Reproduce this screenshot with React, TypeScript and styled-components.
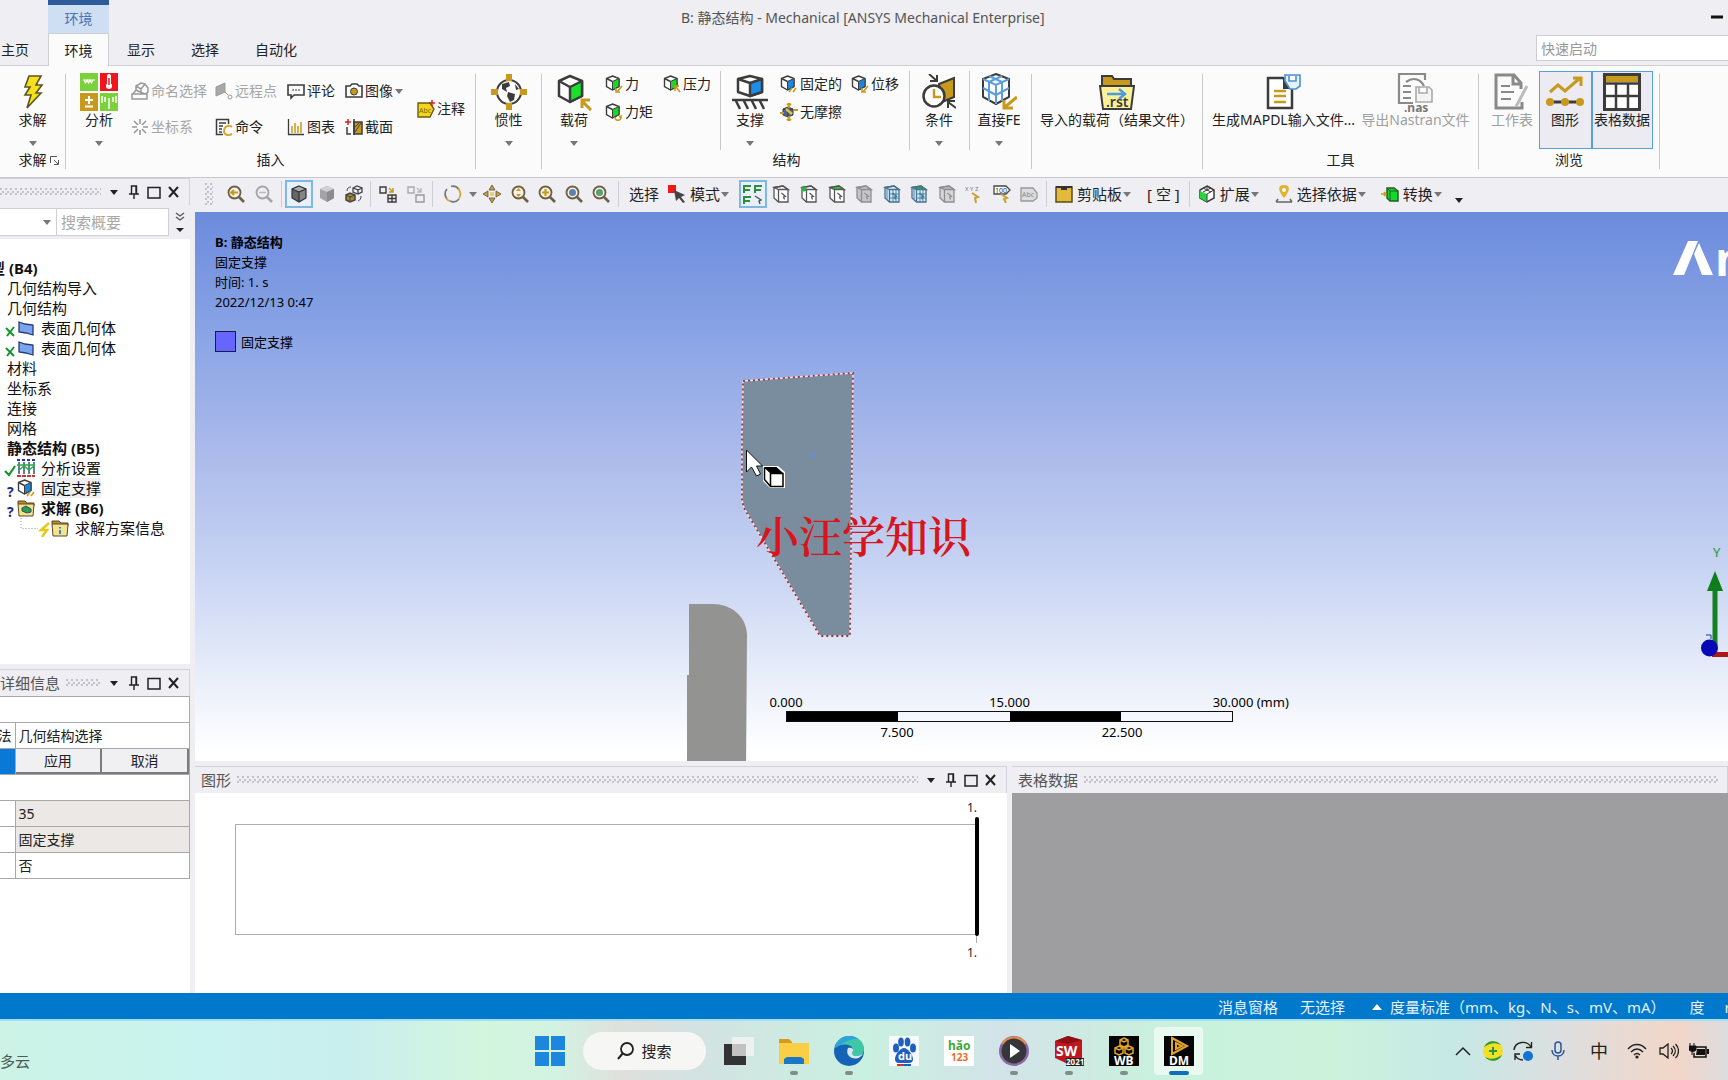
import React from "react";
import styled, { createGlobalStyle, css } from "styled-components";

const SANS = '"Noto Sans", "Noto Sans CJK SC", sans-serif';
const GOLD = "#c79a1e";
const INK = "#3c3c3c";

const GlobalStyle = createGlobalStyle`
  * { box-sizing: border-box; }
  body { margin: 0; overflow: hidden; background: #efeef3; font: 14px/18px ${SANS}; color: #222; }
  button, input, select { font: inherit; color: inherit; }
  button { background: none; border: 0; padding: 0; white-space: nowrap; }
  svg { display: block; flex: none; }
`;

/* ---------- frame ---------- */
const Window = styled.div`
  display: flex;
  flex-direction: column;
  height: 100vh;
  overflow: hidden;
`;
const Header = styled.header`
  display: grid;
  flex: none;
  grid-template-columns: 48px 61px 1fr 192px;
  grid-template-rows: 33px 33px;
  background: #efeef3;
  border-bottom: 1px solid #cfced3;
  height: 66px;
`;
const ContextTab = styled.div`
  grid-column: 2;
  border-top: 5px solid #2f5b9b;
  background: #cfdff3;
  color: #4a72b5;
  text-align: center;
  line-height: 28px;
`;
const Title = styled.h1`
  grid-column: 3;
  margin: 0;
  padding-left: 572px;
  font-size: 14px;
  font-weight: 400;
  line-height: 35px;
  color: #555;
  white-space: nowrap;
`;
const Minimise = styled.button`
  justify-self: end;
  padding-right: 5px;
`;
const Tab = styled.button<{ $active?: boolean }>`
  text-align: left;
  padding: 0 18px;
  ${(p) =>
    p.$active &&
    css`
      padding: 0;
      text-align: center;
      background: #fafbfa;
      border: 1px solid #cfced3;
      border-bottom: 0;
      margin-bottom: -1px;
    `}
`;
const HomeTab = styled(Tab)`
  padding: 0 0 0 1px;
`;
const Tabs = styled.nav`
  display: flex;
`;
const QuickLaunch = styled.input`
  height: 26px;
  margin: 2px -1px 0 0;
  padding: 0 4px;
  border: 1px solid #cdcdd8;
  background: #fff;
  min-width: 0;
  &::placeholder { color: #999; opacity: 1; }
`;

/* ---------- ribbon ---------- */
const Ribbon = styled.div`
  display: flex;
  flex: none;
  height: 112px;
  padding-top: 5px;
  background: #fafbfa;
  border-bottom: 1px solid #c9c9cd;
`;
const Group = styled.section<{ $w: number }>`
  flex: 0 0 ${(p) => p.$w}px;
  display: flex;
  flex-direction: column;
  height: 98px;
`;
const GroupBody = styled.div`
  display: flex;
  justify-content: center;
  height: 79px;
`;
const GroupLabel = styled.div`
  display: flex;
  justify-content: center;
  align-items: center;
  position: relative;
  line-height: 19px;
`;
const Launcher = styled.svg`
  position: absolute;
  left: 50px;
  top: 6px;
`;
const Divider = styled.div<{ $inner?: boolean }>`
  flex: 0 0 1px;
  height: ${(p) => (p.$inner ? 79 : 95)}px;
  margin-top: ${(p) => (p.$inner ? 0 : 3)}px;
  background: #c8c8cc;
`;
const Big = styled.button<{ $w: number; $on?: boolean; $off?: boolean }>`
  flex: 0 0 ${(p) => p.$w}px;
  display: flex;
  flex-direction: column;
  align-items: center;
  height: 78px;
  border: 1px solid ${(p) => (p.$on ? "#55a0e0" : "transparent")};
  background: ${(p) => (p.$on ? "#ecebf2" : "none")};
  color: ${(p) => (p.$off ? "#a0a0a0" : "#222")};
`;
const BigIcon = styled.span`
  display: grid;
  place-items: center;
  height: 39px;
  padding-top: 1px;
`;
const Caret = styled.i<{ $dark?: boolean; $gap?: number }>`
  display: inline-block;
  border: 4px solid transparent;
  border-top: 5px solid ${(p) => (p.$dark ? "#222" : "#777")};
  border-bottom: 0;
  margin-top: ${(p) => p.$gap ?? 0}px;
`;
const SmallGrid = styled.div<{ $cols: string; $row: number; $left: number; $top?: number }>`
  display: grid;
  grid-template-columns: ${(p) => p.$cols};
  grid-auto-rows: ${(p) => p.$row}px;
  margin-left: ${(p) => p.$left}px;
  margin-top: ${(p) => p.$top ?? -1}px;
`;
const Small = styled.button<{ $off?: boolean }>`
  display: flex;
  align-items: center;
  gap: 2px;
  color: ${(p) => (p.$off ? "#a6a6a6" : "#222")};
`;
const Sub = styled.div<{ $w: number; $pad?: number }>`
  flex: 0 0 ${(p) => p.$w}px;
  display: flex;
  padding-left: ${(p) => p.$pad ?? 0}px;
`;

/* ---------- workspace ---------- */
const Work = styled.main`
  flex: 1;
  min-height: 0;
  display: flex;
  gap: 5px;
`;
const Side = styled.aside`
  flex: 0 0 190px;
  display: flex;
  flex-direction: column;
  min-height: 0;
  overflow: hidden;
`;
const Stage = styled.div`
  flex: 1;
  min-width: 0;
  display: flex;
  flex-direction: column;
`;
const PanelHead = styled.header<{ $pad?: number }>`
  display: flex;
  align-items: center;
  gap: 6px;
  flex: none;
  height: 27px;
  padding: 0 9px 0 ${(p) => p.$pad ?? 0}px;
  border: 1px solid #d3d2da;
  border-left: 0;
  border-bottom: 0;
  background: #efeef2;
  font-size: 15px;
  color: #555;
  white-space: nowrap;
  overflow: hidden;
`;
const Dots = styled.span`
  flex: 1;
  height: 8px;
  background-image: radial-gradient(circle at 1px 1px, #c2c1c9 0.9px, transparent 1px),
    radial-gradient(circle at 3px 4px, #c2c1c9 0.9px, transparent 1px);
  background-size: 5px 5px;
`;
const HeadButtons = styled.span`
  display: flex;
  align-items: center;
  gap: 7px;
`;
const HeadBtn = styled.button`
  display: grid;
  place-items: center;
  width: 13px;
  height: 20px;
`;
const Filter = styled.div`
  display: flex;
  flex: none;
  height: 34px;
  padding: 3px 0;
  background: #efeef2;
`;
const FilterSelect = styled.span`
  position: relative;
  flex: 0 0 57px;
  display: flex;
  select {
    appearance: none;
    width: 100%;
    border: 1px solid #cfcfda;
    border-left: 0;
    border-radius: 0;
    background: #fff;
  }
  i { position: absolute; right: 6px; top: 12px; }
`;
const FilterInput = styled.input`
  flex: 0 0 112px;
  min-width: 0;
  border: 1px solid #cfcfda;
  border-left: 0;
  padding: 0 4px;
  font-size: 15px;
  &::placeholder { color: #a8a8a8; opacity: 1; }
`;
const Overflow = styled.button`
  flex: 1;
  display: grid;
  place-items: center;
`;
const Tree = styled.ul`
  flex: 1;
  margin: 0;
  padding: 19px 0 0;
  list-style: none;
  background: #fff;
  overflow: hidden;
`;
const Node = styled.li<{ $x: number; $bold?: boolean }>`
  display: flex;
  align-items: center;
  height: 20px;
  margin-left: ${(p) => p.$x}px;
  font-size: 15px;
  font-weight: ${(p) => (p.$bold ? 700 : 400)};
  color: #111;
  white-space: nowrap;
  svg:last-of-type { margin-right: 6px; }
`;
const Chip = styled.span<{ $on?: boolean }>`
  background: ${(p) => (p.$on ? "#f0eff2" : "none")};
  line-height: 20px;
`;
const Details = styled.section`
  flex: 0 0 324px;
  margin-top: 5px;
  background: #fff;
`;
const Props = styled.table`
  width: 190px;
  border-collapse: collapse;
  table-layout: fixed;
  color: #222;
  td, th {
    height: 26px;
    padding: 0 3px;
    border: 1px solid #a9a8a8;
    border-left: 0;
    font-weight: 400;
    line-height: 24px;
    white-space: nowrap;
    overflow: hidden;
  }
`;
const KeyCell = styled.th<{ $on?: boolean }>`
  width: 15px;
  background: ${(p) => (p.$on ? "#0a78d6" : "#fff")};
  span { display: flex; justify-content: flex-end; }
`;
const ValueCell = styled.td<{ $ro?: boolean }>`
  background: ${(p) => (p.$ro ? "#ebe8e5" : "#fff")};
`;
const ButtonCell = styled.td`
  && { padding: 0; }
  div { display: flex; }
`;
const ApplyBtn = styled.button`
  flex: 1;
  height: 25px;
  background: #f0eff2;
  border-right: 2px solid #7b7b7b;
  border-bottom: 2px solid #7b7b7b;
`;

/* ---------- toolbar ---------- */
const Toolbar = styled.div`
  display: flex;
  align-items: center;
  flex: none;
  height: 34px;
  padding: 0 0 2px 10px;
  background: #efeef3;
  font-size: 15px;
`;
const Grip = styled.span`
  width: 8px;
  height: 22px;
  margin-right: 9px;
  background-image: radial-gradient(circle at 1px 1px, #c2c1c9 0.9px, transparent 1px),
    radial-gradient(circle at 3px 4px, #c2c1c9 0.9px, transparent 1px);
  background-size: 5px 5px;
`;
const Tool = styled.button<{ $on?: boolean; $w?: number }>`
  display: grid;
  place-items: center;
  flex: 0 0 ${(p) => p.$w ?? 28}px;
  height: 28px;
  border: 2px solid ${(p) => (p.$on ? "#7db7e2" : "transparent")};
  background: ${(p) => (p.$on ? "#e8f1fa" : "none")};
`;
const ToolSep = styled.span`
  flex: 0 0 1px;
  height: 26px;
  margin: 0 3px;
  background: #cfced6;
`;
const ToolText = styled.button<{ $l?: number; $r?: number }>`
  display: flex;
  align-items: center;
  gap: 4px;
  margin-left: ${(p) => p.$l ?? 0}px;
  margin-right: ${(p) => p.$r ?? 0}px;
  i { margin-left: -3px; }
`;

/* ---------- viewport ---------- */
const View = styled.section`
  position: relative;
  flex: 1;
  min-height: 0;
  overflow: hidden;
  background: linear-gradient(#6b8bdc, #8ca6e6 24%, #a8b8ea 42%, #c9d5f3 66%, #e4eaf9 82%, #fff 98%);
  font-size: 13px;
  color: #000;
`;
const Info = styled.div`
  position: absolute;
  left: 20px;
  top: 20px;
  line-height: 20px;
  b, span { display: block; }
`;
const Legend = styled.div`
  display: flex;
  align-items: center;
  gap: 5px;
  margin-top: 19px;
  i { width: 21px; height: 21px; background: #6666ff; border: 1px solid #1a1a50; }
`;
const Model = styled.svg`
  position: absolute;
  left: 0;
  top: 0;
`;
const Watermark = styled.div`
  position: absolute;
  left: 561px;
  top: 299px;
  font: 600 43px/48px "Noto Serif CJK SC", "Noto Sans CJK SC", serif;
  color: #d8141c;
  white-space: nowrap;
`;
const Scale = styled.div`
  position: absolute;
  left: 591px;
  top: 480px;
  width: 447px;
`;
const Ticks = styled.div<{ $inset?: boolean }>`
  display: flex;
  justify-content: space-between;
  height: 19px;
  line-height: 20px;
  padding: 0 ${(p) => (p.$inset ? 111 : 0)}px;
  span { display: flex; justify-content: center; width: 0; white-space: pre; }
  em { font-style: normal; width: 0; }
`;
const Bar = styled.div`
  display: grid;
  grid-template-columns: repeat(4, 1fr);
  height: 11px;
  border: 1px solid #111;
  i:nth-child(odd) { background: #000; }
`;
const Logo = styled.div`
  position: absolute;
  left: calc(100% - 55px);
  top: 29px;
  display: flex;
  gap: 1px;
  color: #fff;
  font: 700 46px/34px "Open Sans", sans-serif;
`;
const Triad = styled.svg`
  position: absolute;
  right: 0;
  top: 329px;
`;

/* ---------- bottom panes ---------- */
const Panes = styled.div`
  flex: 0 0 232px;
  display: flex;
  gap: 5px;
  padding-top: 5px;
`;
const Pane = styled.section<{ $basis: string; $bg: string }>`
  flex: ${(p) => p.$basis};
  display: flex;
  flex-direction: column;
  min-width: 0;
  background: ${(p) => p.$bg};
`;
const Graph = styled.div`
  padding: 6px 30px 0 40px;
  font-size: 12px;
  text-align: right;
`;
const Plot = styled.div`
  position: relative;
  height: 111px;
  margin: 7px 0 9px;
  border: 1px solid #adadad;
  &::before {
    content: "";
    position: absolute;
    right: -1px;
    top: 100%;
    width: 1px;
    height: 9px;
    background: #adadad;
  }
  &::after {
    content: "";
    position: absolute;
    right: -3px;
    top: -8px;
    bottom: -2px;
    width: 4px;
    border-radius: 2px;
    background: #000;
  }
`;
const Status = styled.footer`
  flex: 0 0 26px;
  display: flex;
  align-items: center;
  justify-content: flex-end;
  background: #0078cb;
  color: #e4f1fb;
  font-size: 15px;
  line-height: 24px;
  white-space: nowrap;
  margin-right: -42px;
  padding-top: 2px;
`;
const StatusItem = styled.span<{ $r: number }>`
  display: flex;
  align-items: center;
  gap: 8px;
  margin-right: ${(p) => p.$r}px;
  i { border: 5px solid transparent; border-top: 0; border-bottom: 6px solid #fff; }
`;

/* ---------- taskbar ---------- */
const Taskbar = styled.div`
  flex: 0 0 61px;
  display: grid;
  grid-template-columns: 1fr auto 1fr;
  border-top: 2px solid #a6dff5;
  background: linear-gradient(90deg, #cdf3e6 0, #c9f3f0 12%, #c9eeee 20%, #d3f6df 28%, #d2f3e2 32%, #dfe0dc 36%, #d3e2e2 40%, #c9f0e0 50%, #d3e3e8 58%, #c8f2dc 68%, #cdf2dc 77%, #c6e9e6 84%, #dcdfe0 90%, #f2d6c8 97%, #dcdce0);
`;
const Weather = styled.span`
  align-self: center;
  margin-top: 20px;
  font-size: 15px;
  color: #4b5b58;
`;
const Apps = styled.div`
  display: flex;
  align-items: center;
`;
const AppBtn = styled.button<{ $w?: number; $on?: boolean }>`
  position: relative;
  display: grid;
  place-items: center;
  width: ${(p) => p.$w ?? 55}px;
  height: 50px;
  &::before {
    content: "";
    position: absolute;
    inset: 1px 3px;
    border-radius: 4px;
    background: ${(p) => (p.$on ? "rgba(255,255,255,.6)" : "none")};
  }
  svg { position: relative; }
`;
const Mark = styled.i<{ $on?: boolean }>`
  position: absolute;
  bottom: 1px;
  width: ${(p) => (p.$on ? 20 : 8)}px;
  height: 4px;
  border-radius: 2px;
  background: ${(p) => (p.$on ? "#0f6fb8" : "#7c8f8a")};
`;
const Search = styled.button`
  display: flex;
  align-items: center;
  justify-content: center;
  gap: 7px;
  width: 123px;
  height: 38px;
  margin: 0 5px 0 6px;
  border-radius: 19px;
  background: #f6f6f4;
  font-size: 15px;
`;
const Tray = styled.div`
  display: flex;
  align-items: center;
  justify-content: flex-end;
  padding-right: 14px;
`;
const TrayBtn = styled.button<{ $w: number }>`
  display: grid;
  place-items: center;
  width: ${(p) => p.$w}px;
  height: 40px;
  font-size: 18px;
`;

/* ---------- icons ---------- */
type IconProps = { w?: number; h?: number; vb?: string; children: React.ReactNode };
const Svg = ({ w = 18, h = 18, vb, children }: IconProps) => (
  <svg width={w} height={h} viewBox={vb ?? `0 0 ${w} ${h}`} fill="none" aria-hidden="true">{children}</svg>
);
const SmallCube = ({ face, tail }: { face: string; tail: string }) => (
  <Svg>
    <path d="M7.500 1 14 3.500v8L7.500 15 1.500 11.500v-8z" fill="#fff" stroke={INK} strokeWidth="1.400" />
    <path d="M7.500 6.500 14 3.500v8L7.500 15z" fill={face} stroke={INK} />
    <path d="M1.500 3.500l6 3" stroke={INK} strokeWidth="1.400" />
    <path d={tail} stroke={GOLD} strokeWidth="1.600" />
  </Svg>
);
const ToolCube = ({ face = "#fff", top = "none", line = "#555", dot = "none", grid = false }: { face?: string; top?: string; line?: string; dot?: string; grid?: boolean }) => (
  <Svg>
    <path d="M2 2.500 11 1l5 3.500V17H6.500L2 13z" fill={face} stroke={line} strokeWidth="1.300" />
    <path d="M2 2.500 11 1l5 3.500H6.500z" fill={top} stroke={line} strokeWidth="1.300" />
    <path d="M6.500 4.500V17" stroke={line} strokeWidth="1.300" />
    <circle cx="4" cy="4" r="2.500" fill={dot} />
    {grid && <path d="M6.500 9H16M6.500 13H16M10 4.500V17M13 4.500V17M4 3.500v11" stroke="#3c86b8" />}
    <path d="M9.500 8l4 3.500-2 .5 1 2.500" stroke={line} strokeWidth="1.200" />
  </Svg>
);
const Lens = ({ line = "#6b5f48", inner, fill = "#f6f1e2" }: { line?: string; inner?: React.ReactNode; fill?: string }) => (
  <Svg>
    <circle cx="7.500" cy="7.500" r="6" fill={fill} stroke={line} strokeWidth="1.800" />
    <path d="M12 12l5 5" stroke={line} strokeWidth="2.600" />
    {inner}
  </Svg>
);
const Bolt = () => (
  <Svg w={24} h={36}><path d="M8 2h12l-5 9h6l-6 8h5L6 34l4-13H4l5-8H4z" fill="#f6e01e" stroke="#5b5524" strokeWidth="1.600" /></Svg>
);
const Analysis = () => (
  <Svg w={38} h={38}>
    <path d="M0 0h18v18H0zM20 20h18v18H20z" fill="#7bd13c" />
    <path d="M20 0h18v18H20z" fill="#f0141c" /><path d="M0 20h18v18H0z" fill={GOLD} />
    <path d="M3 7h12M4 7l1.500 3L7 7l1.500 3L10 7l1.500 3L13 7" stroke="#fff" strokeWidth="1.200" />
    <path d="M29 3v9" stroke="#fff" strokeWidth="4" strokeLinecap="round" /><circle cx="29" cy="13" r="3" fill="#fff" /><path d="M29 5v7" stroke="#f0141c" strokeWidth="1.500" />
    <path d="M9 23v8M5 27h8M5 33.500h8" stroke="#fff" strokeWidth="2" />
    <path d="M29 25v11M25 24v5M33 24v5M22 23v7M36 23v7" stroke="#fff" strokeWidth="1.500" />
  </Svg>
);
const Globe = () => (
  <Svg w={36} h={36}>
    <circle cx="18" cy="18" r="12" fill="#fff" stroke={INK} strokeWidth="2" />
    <path d="M11 10l7-2 1 4-4 2 1 4-5-3zM17 18l7 2-1 6-4 2-3-6zM24 10l4 5-3 1z" fill={INK} />
    <path d="M15 0h6v7h-6zM15 29h6v7h-6zM0 15h7v6H0zM29 15h7v6h-7z" fill={GOLD} />
  </Svg>
);
const Load = () => (
  <Svg w={36} h={38}>
    <g stroke={INK} strokeWidth="2.500" strokeLinejoin="round"><path d="M14 3l12 5v15L14 29 3 23V8z" fill="#fff" /><path d="M14 14l12-6v15l-12 6z" fill="#19e02b" /><path d="M3 8l11 6" /></g>
    <path d="M35 37l-9-9M26 35v-8h8" stroke={GOLD} strokeWidth="3" />
  </Svg>
);
const Support = () => (
  <Svg w={36} h={36}>
    <g stroke={INK} strokeWidth="2.500" strokeLinejoin="round"><path d="M18 2l12 3v13l-12 4-12-4V5z" fill="#fff" /><path d="M18 9l12-4v13l-12 4z" fill="#1b8fe8" /><path d="M6 5l12 4" /></g>
    <path d="M0 26h36M4 27l4 8M12 27l4 8M20 27l4 8M28 27l4 8" stroke={INK} strokeWidth="2.500" />
  </Svg>
);
const Condition = () => (
  <Svg w={34} h={36}>
    <path d="M17 10l15-6v19l-12 5z" fill={GOLD} stroke={INK} strokeWidth="2" />
    <circle cx="12" cy="22" r="10.500" fill="#fff" stroke={INK} strokeWidth="2.500" /><path d="M12 15v8h7" stroke={GOLD} strokeWidth="2.500" />
    <path d="M7 0l8 7M15 1v6H8M34 34l-8-6M26 34v-7h7" stroke={INK} strokeWidth="2" />
  </Svg>
);
const DirectFE = () => (
  <Svg w={36} h={38}>
    <path d="M15 1l13 5v18l-13 7-13-7V6z" fill="#fff" stroke={INK} strokeWidth="2" />
    <path d="M2 6l13 6 13-6M15 12v19M8 3l13 6v19M21 3L8 9v19M2 15l13 7 13-7" stroke="#5b9ee0" strokeWidth="2" />
    <path d="M36 24l-12 10M23 27v8h9" stroke={GOLD} strokeWidth="3" />
  </Svg>
);
const Rst = () => (
  <Svg w={36} h={36}>
    <path d="M3 11V2h10l2 3h17v7" fill={GOLD} stroke={INK} strokeWidth="2" />
    <path d="M1 12h34l-3 23H4z" fill="#fdf09b" stroke={INK} strokeWidth="2" />
    <path d="M8 20h16M20 15l6 5-6 5" stroke="#4b9be0" strokeWidth="2.500" />
    <text x="7" y="33" fontFamily="Noto Sans" fontWeight="600" fontSize="14" fill={INK}>.rst</text>
  </Svg>
);
const Mapdl = () => (
  <Svg w={36} h={36}>
    <path d="M2 4h15l9 10v20H2z" fill="#fff" stroke={INK} strokeWidth="2.500" /><path d="M17 3v12h10z" fill={INK} />
    <path d="M8 17h12M8 22h12M8 28h12" stroke={GOLD} strokeWidth="2.500" />
    <path d="M19 1h15v11l-4 3h-6l-5-8zM23 2v5h7V2" fill="#e6f1fb" stroke="#4b90d8" strokeWidth="1.600" />
  </Svg>
);
const Nas = () => (
  <Svg w={38} h={40}>
    <path d="M28 7V1H2v29h14" stroke="#8a8a8a" strokeWidth="2.200" />
    <path d="M6 13h8M6 19h8M6 25h8M9 9c8-6 15-2 18 4" stroke="#8a8a8a" strokeWidth="2.200" />
    <path d="M19 14h13l3 3v12H19zM22 14v6h8v-6" fill="#f4f4f4" stroke="#aaa" strokeWidth="1.600" />
    <text x="7" y="39" fontFamily="Noto Sans" fontWeight="700" fontSize="12" fill="#777">.nas</text>
  </Svg>
);
const Sheet = () => (
  <Svg w={36} h={38}>
    <path d="M27 16V10l-7-8H2v33h26v-6M19 2v9h8" stroke="#8a8a8a" strokeWidth="3" />
    <path d="M7 13h9M7 19h13M7 26h10" stroke="#8a8a8a" strokeWidth="2" /><path d="M33 13l-9 17-2 3" stroke="#bbb" strokeWidth="3" />
  </Svg>
);
const GraphIcon = () => (
  <Svg w={38} h={32}>
    <path d="M4 16l8-7 7 6L34 2M27 2h8v8" stroke={GOLD} strokeWidth="3" />
    <path d="M4 26h30" stroke={INK} strokeWidth="3" />
    <g fill={GOLD}><circle cx="4" cy="26" r="4" /><circle cx="19" cy="26" r="4" /><circle cx="34" cy="26" r="4" /></g>
  </Svg>
);
const TableIcon = () => (
  <Svg w={38} h={38}>
    <path d="M1.500 1.500h35v35h-35z" fill="#fff" stroke={INK} strokeWidth="3" /><path d="M3 3h32v6H3z" fill={GOLD} />
    <path d="M1 10.500h36M1 23h36M13 10v26M25 10v26" stroke={INK} strokeWidth="2.500" />
  </Svg>
);
const NamedSel = () => <Svg><path d="M1 12h15v5H1zM2 12l3-4M5 4l5-3 4 1 3 4v4l-3 2-5-2-4-2zM5 4l5 3v4M10 7l4-5" stroke="#999" strokeWidth="1.500" /></Svg>;
const Remote = () => <Svg><path d="M1 5l9-4v9l-9 4z" fill="#a8a8a8" stroke="#999" /><path d="M10 10l3 3" stroke="#999" /><circle cx="15" cy="15" r="2" stroke="#999" /></Svg>;
const Comment = () => <Svg><path d="M1 3h16v10H7l-3 3v-3H1z" stroke={INK} strokeWidth="1.600" /><path d="M5 8h2M8 8h2M11 8h2" stroke={INK} /></Svg>;
const Camera = () => <Svg><path d="M1 4h4l2-2h5l2 2h3v11H1z" stroke={INK} strokeWidth="1.600" /><circle cx="9" cy="9.500" r="3.500" fill={GOLD} stroke={INK} /></Svg>;
const Axis = () => <Svg><path d="M9 1v5M9 12v5M1 9h5M12 9h5M3 3l4 4M15 3l-4 4M3 15l4-4M15 15l-4-4" stroke="#999" strokeWidth="1.600" /></Svg>;
const Cmd = () => <Svg><path d="M8 16.500H1.500v-15h12V6M4 5h7M4 8h4M4 11h3M4 14h3" stroke={INK} strokeWidth="1.500" /><path d="M17 9c-4-3-8 0-8 4s4 5 8 3" stroke="#dba43a" strokeWidth="2" /></Svg>;
const Bars = () => <Svg><path d="M1.500 1v15.500H17" stroke={INK} strokeWidth="1.300" /><path d="M5 15V8M8 15V5M11 15V8M14 15V4" stroke={GOLD} strokeWidth="1.500" /></Svg>;
const Section = () => <Svg><path d="M9 4h8v12H9z" fill={GOLD} stroke={INK} strokeWidth="1.500" /><path d="M6 16H2V9M9 1v16" stroke={INK} strokeWidth="1.500" /><path d="M0 4h6M3 1v6" stroke="#e02020" strokeWidth="1.500" /><path d="M10 14l6-9M10 9l4-4" stroke={INK} /></Svg>;
const Note = () => <Svg><path d="M1 3h12l4 6-4 8H1z" fill="#f2d51c" stroke="#6c5c10" strokeWidth="1.400" /><path d="M12 3h6M15 0v6" stroke="#e02020" strokeWidth="1.500" /><text x="2" y="13" fontSize="7" fontFamily="Noto Sans" fill="#7a6a10">Abc</text></Svg>;
const Frictionless = () => <Svg><path d="M3 6l5-2 5 2v6l-5 2-5-2z" fill="#4d6791" stroke={INK} /><path d="M3 6l5 2 5-2M8 8v6" stroke={INK} /><path d="M9 0v5M9 13v5M0 10h4M13 7h5M7 2l2-2 2 2M7 16l2 2 2-2" stroke={GOLD} strokeWidth="1.800" /><path d="M6 6l6 5" stroke="#e3c04a" strokeWidth="2.500" /></Svg>;

const Solid = ({ d = false }: { d?: boolean }) => (
  <Svg><path d="M9 1l7 3v9l-7 4-7-4V4z" fill={d ? "#666" : "#a4a4a8"} /><path d="M9 1l7 3-7 3-7-3z" fill={d ? "#a9a9a9" : "#d2d2d4"} /><path d="M9 7l7-3v9l-7 4z" fill={d ? "#858585" : "#8b8b90"} />{d && <path d="M9 1l7 3v9l-7 4-7-4V4zM2 4l7 3 7-3M9 7v10" stroke="#333" strokeWidth="1.200" />}</Svg>
);
const Swap = () => <Svg><path d="M8 3l4-2 5 2v4l-4 2-5-2zM8 3l5 2v4M13 5l4-2" stroke="#444" strokeWidth="1.300" /><path d="M1 10l4-2 5 2v5l-5 2-4-2z" fill="#a58a2c" stroke="#444" strokeWidth="1.500" /><path d="M1 10l4 2 5-2M5 12v5M2 6c0-3 2-4 4-4M16 11c0 3-1 4-3 5" stroke="#444" /></Svg>;
const Expand = ({ off }: { off?: boolean }) => <Svg><path d="M1 2h6v6H1z" stroke={off ? "#aaa" : INK} strokeWidth="1.400" /><path d="M10 3l4 4M14 3v4h-4" stroke={off ? "#bbb" : GOLD} strokeWidth="1.500" /><path d="M9 10h8v7H9z" stroke={off ? "#999" : INK} strokeWidth="1.400" />{!off && <path d="M13 10v7M9 13.500h8" stroke={INK} strokeWidth="1.400" />}</Svg>;
const Rotate = () => <Svg><path d="M3 14a7.500 7.500 0 0 1 0-10M7 1.500a7.500 7.500 0 0 1 8 3M15 14a7.500 7.500 0 0 1-9 2" stroke="#77777c" strokeWidth="1.800" /><path d="M14 3.500a7.500 7.500 0 0 1 1 10M2 13a7 7 0 0 0 4 3" stroke="#d3a43c" strokeWidth="1.800" /></Svg>;
const Move = () => <Svg><path d="M9 0l3 5H6zM9 18l3-5H6zM0 9l5-3v6zM18 9l-5-3v6z" fill="#c9a132" stroke="#5a5040" strokeWidth=".8" /><path d="M7 7h4v4H7z" fill="#e6cf88" /></Svg>;
const Mode = () => <Svg><path d="M0 0h8v8H0z" fill="#f01818" /><path d="M6 5l11 5-4 2 4 5-2 1-4-5-3 3z" fill="#444" /></Svg>;
const SelFilter = () => <Svg w={22} h={22}><path d="M1 3h8M2 3v7M2 7h6M12 3h8M13 3v7M13 7h6M1 14h8M2 14v7M2 18h6" stroke="#2f8c3c" strokeWidth="2" /><path d="M13 13l6 4-2 1 1 3" stroke="#555" strokeWidth="1.400" /></Svg>;
const Xyz = () => <Svg><text x="0" y="6" fontSize="6" fontFamily="Noto Sans" fill="#777">X Y Z</text><path d="M7 8l6 4-3 1 1 5" stroke="#c9a132" strokeWidth="2" /></Svg>;
const Tag = ({ t, off }: { t: string; off?: boolean }) => <Svg><path d={off ? "M1 3h12l4 5v5l-4 3H1z" : "M1 1h12l4 4-4 4H1z"} fill={off ? "#ddd" : "#fff"} stroke={off ? "#999" : "#444"} strokeWidth="1.300" /><text x="2" y={off ? 12 : 8} fontSize="7" fontFamily="Noto Sans" fill={off ? "#888" : "#333"}>{t}</text>{!off && <path d="M8 9l6 4-3 1 2 4" stroke="#c9a132" strokeWidth="2" />}</Svg>;
const Clip = () => <Svg><path d="M1 2h16v15H1z" fill="#e3b93c" stroke="#5c4b18" strokeWidth="1.500" /><path d="M1 2h16M6 4h6" stroke="#333" strokeWidth="2" /></Svg>;
const Extend = () => <Svg><path d="M9 1l7 4v8l-7 4-7-4V5z" fill="#fff" stroke={INK} strokeWidth="1.500" /><path d="M2 6l7 3v8l-7-4z" fill="#2bd63a" /><path d="M9 9l7-4M9 9v8M9 1v5M5 3l8 4M13 3L5 7" stroke={INK} /></Svg>;
const Pin = () => <Svg><path d="M9 0c7 0 6 6 0 13C3 6 2 0 9 0z" fill="#e0b230" /><circle cx="9" cy="5" r="2" fill="#fff" /><path d="M1 17h16M3 14l-2 3M15 14l2 3" stroke="#666" strokeWidth="1.600" /></Svg>;
const Convert = () => <Svg><path d="M6 3h7l4 3v10H9l-3-3z" fill="#16d82c" stroke="#225c28" strokeWidth="1.500" /><path d="M6 3l3 3h8M9 6v10" stroke="#225c28" /><path d="M0 9h5M3 7l2 2-2 2" stroke={GOLD} strokeWidth="1.500" /></Svg>;

const TreeMark = ({ k }: { k: "x" | "v" | "?" | "z" }) => (
  <Svg w={13} h={18}>
    {k === "x" && <path d="M2 9l8 8M10 8l-7 9" stroke="#14962a" strokeWidth="2" />}
    {k === "v" && <path d="M1 12l4 4 6-9" stroke="#14962a" strokeWidth="2.200" />}
    {k === "?" && <text x="3" y="18" fontSize="14" fontWeight="700" fontFamily="Noto Sans" fill="#1a2a8c">?</text>}
    {k === "z" && <path d="M11 4l-8 7h6l-5 7" stroke="#e8c71c" strokeWidth="2.500" />}
  </Svg>
);
const Surface = () => <Svg><path d="M2 3l6 2 8 1v10l-7-2-7-1z" fill="#7aa4ec" stroke="#23397c" strokeWidth="1.300" /></Svg>;
const Settings = () => <Svg><path d="M2 3v12M7 3v12M12 3v12M17 3v12" stroke="#2c5a70" strokeWidth="1.500" /><path d="M0 6h18M2 11l5-4 5 4 5-4" stroke="#2fa84a" strokeWidth="1.500" /><path d="M0 17h4M5 17h4M10 17h4M15 17h3" stroke="#d03030" strokeWidth="1.800" /><path d="M0 1h18" stroke="#2438a0" strokeWidth="1.800" strokeDasharray="3 2" /></Svg>;
const Folder = ({ info }: { info?: boolean }) => <Svg><path d="M1 5V2h7l2 2h7v3" fill="#b88a2a" stroke="#5c4a1e" /><path d="M1 5h16l-1 12H2z" fill="#f5e394" stroke="#5c4a1e" />{info ? <path d="M9 8v1.500M9 11v4" stroke="#2480c0" strokeWidth="1.800" /> : <path d="M5 9l4-2 5 3v3l-4 1-5-2z" fill="#2e9a4a" stroke="#256" />}</Svg>;

const PanelButtons = () => (
  <HeadButtons>
    <HeadBtn aria-label="菜单"><Caret $dark /></HeadBtn>
    <HeadBtn aria-label="固定"><Svg w={12} h={14}><path d="M3.500 1h5v8h-5zM1 9h10M6 9v5M8 1v8" stroke="#222" strokeWidth="1.400" /></Svg></HeadBtn>
    <HeadBtn aria-label="最大化"><Svg w={14} h={13}><path d="M1 1.500h12v10.500H1z" stroke="#222" strokeWidth="1.500" /></Svg></HeadBtn>
    <HeadBtn aria-label="关闭"><Svg w={11} h={12}><path d="M1 1l9 10M10 1L1 11" stroke="#222" strokeWidth="2" /></Svg></HeadBtn>
  </HeadButtons>
);

type BigProps = { w: number; icon: React.ReactNode; text: string; caret?: boolean; on?: boolean; off?: boolean };
const BigButton = ({ w, icon, text, caret, on, off }: BigProps) => (
  <Big $w={w} $on={on} $off={off}>
    <BigIcon>{icon}</BigIcon>{text}{caret && <Caret $gap={12} />}
  </Big>
);
const GREEN = "#19d62b";
const BLUE = "#1b86dc";

const Sq = ({ bg, children }: { bg: string; children: React.ReactNode }) => (
  <Svg w={30} h={30}><path d="M0 0h30v30H0z" fill={bg} />{children}</Svg>
);

export default function App() {
  return (
    <Window>
      <GlobalStyle />
      <Header>
        <ContextTab>环境</ContextTab>
        <Title>B: 静态结构 - Mechanical [ANSYS Mechanical Enterprise]</Title>
        <Minimise aria-label="最小化"><Svg w={12} h={4}><path d="M0 2h12" stroke="#111" strokeWidth="3" /></Svg></Minimise>
        <HomeTab>主页</HomeTab>
        <Tab $active>环境</Tab>
        <Tabs><Tab>显示</Tab><Tab>选择</Tab><Tab>自动化</Tab></Tabs>
        <QuickLaunch aria-label="快速启动" placeholder="快速启动" />
      </Header>

      <Ribbon>
        <Group $w={65}>
          <GroupBody><BigButton w={60} icon={<Bolt />} text="求解" caret /></GroupBody>
          <GroupLabel>求解<Launcher width="9" height="9" viewBox="0 0 9 9" fill="none" stroke="#555"><path d="M.5 7V.5H7M4 4l4 4M8.500 4v4.500H4" /></Launcher></GroupLabel>
        </Group>
        <Divider />
        <Group $w={409}>
          <GroupBody>
            <BigButton w={46} icon={<Analysis />} text="分析" caret />
            <SmallGrid $cols="84px 72px 58px 72px" $row={36} $left={9} $top={2}>
              <Small $off><NamedSel />命名选择</Small>
              <Small $off><Remote />远程点</Small>
              <Small><Comment />评论</Small>
              <Small><Camera />图像<Caret /></Small>
              <Small $off><Axis />坐标系</Small>
              <Small><Cmd />命令</Small>
              <Small><Bars />图表</Small>
              <Small><Section />截面</Small>
            </SmallGrid>
            <SmallGrid $cols="48px" $row={72} $left={0} $top={2}><Small><Note />注释</Small></SmallGrid>
          </GroupBody>
          <GroupLabel>插入</GroupLabel>
        </Group>
        <Divider />
        <Group $w={65}><GroupBody><BigButton w={60} icon={<Globe />} text="惯性" caret /></GroupBody></Group>
        <Divider />
        <Group $w={489}>
          <GroupBody>
            <Sub $w={178} $pad={7}>
              <BigButton w={50} icon={<Load />} text="载荷" caret />
              <SmallGrid $cols="58px 50px" $row={28} $left={6}>
                <Small><SmallCube face={GREEN} tail="M17 11l-5 6M11 13v4h4" />力</Small>
                <Small><SmallCube face={GREEN} tail="M17 17l-4-5M12 16v-5h4" />压力</Small>
                <Small><SmallCube face={GREEN} tail="M10 14c0 5 7 4 6-1l-2 1" />力矩</Small>
              </SmallGrid>
            </Sub>
            <Divider $inner />
            <Sub $w={188} $pad={5}>
              <BigButton w={48} icon={<Support />} text="支撑" caret />
              <SmallGrid $cols="71px 50px" $row={28} $left={6}>
                <Small><SmallCube face={BLUE} tail="M12 13l-3 4M16 13l-3 4" />固定的</Small>
                <Small><SmallCube face={BLUE} tail="M17 11l-5 6M11 13v4h4" />位移</Small>
                <Small><Frictionless />无摩擦</Small>
              </SmallGrid>
            </Sub>
            <Divider $inner />
            <Sub $w={59}><BigButton w={58} icon={<Condition />} text="条件" caret /></Sub>
            <Divider $inner />
            <Sub $w={61}><BigButton w={58} icon={<DirectFE />} text="直接FE" caret /></Sub>
          </GroupBody>
          <GroupLabel>结构</GroupLabel>
        </Group>
        <Divider />
        <Group $w={170}><GroupBody><BigButton w={168} icon={<Rst />} text="导入的载荷（结果文件）" /></GroupBody></Group>
        <Divider />
        <Group $w={275}>
          <GroupBody>
            <BigButton w={150} icon={<Mapdl />} text="生成MAPDL输入文件..." />
            <BigButton w={114} icon={<Nas />} text="导出Nastran文件" off />
          </GroupBody>
          <GroupLabel>工具</GroupLabel>
        </Group>
        <Divider />
        <Group $w={180}>
          <GroupBody>
            <BigButton w={53} icon={<Sheet />} text="工作表" off />
            <BigButton w={53} icon={<GraphIcon />} text="图形" on />
            <BigButton w={61} icon={<TableIcon />} text="表格数据" on />
          </GroupBody>
          <GroupLabel>浏览</GroupLabel>
        </Group>
        <Divider />
      </Ribbon>

      <Work>
        <Side>
          <PanelHead><Dots /><PanelButtons /></PanelHead>
          <Filter>
            <FilterSelect><select aria-label="筛选" /><Caret /></FilterSelect>
            <FilterInput aria-label="搜索概要" placeholder="搜索概要" />
            <Overflow aria-label="更多"><Svg w={10} h={24}><path d="M1 3l4 3 4-3M1 7l4 3 4-3" stroke="#555" strokeWidth="1.300" /><path d="M1 18h8l-4 4z" fill="#222" /></Svg></Overflow>
          </Filter>
          <Tree>
            <Node $x={-25} $bold>模型 (B4)</Node>
            <Node $x={7}>几何结构导入</Node>
            <Node $x={7}>几何结构</Node>
            <Node $x={4}><TreeMark k="x" /><Surface />表面几何体</Node>
            <Node $x={4}><TreeMark k="x" /><Surface />表面几何体</Node>
            <Node $x={7}>材料</Node>
            <Node $x={7}>坐标系</Node>
            <Node $x={7}>连接</Node>
            <Node $x={7}>网格</Node>
            <Node $x={7} $bold>静态结构 (B5)</Node>
            <Node $x={4}><TreeMark k="v" /><Settings />分析设置</Node>
            <Node $x={4}><TreeMark k="?" /><SmallCube face={BLUE} tail="M13 13l-3 4M17 13l-3 4" /><Chip $on>固定支撑</Chip></Node>
            <Node $x={4} $bold><TreeMark k="?" /><Folder />求解 (B6)</Node>
            <Node $x={20}><Svg w={18} h={20}><path d="M1 0v10.500h17" stroke="#999" strokeDasharray="1 2" /></Svg><TreeMark k="z" /><Folder info />求解方案信息</Node>
          </Tree>
          <Details>
            <PanelHead><span>详细信息</span><Dots /><PanelButtons /></PanelHead>
            <Props>
              <colgroup><col width="15" /><col /></colgroup>
              <tbody>
                <tr><ValueCell colSpan={2} /></tr>
                <tr><KeyCell><span>法</span></KeyCell><ValueCell>几何结构选择</ValueCell></tr>
                <tr><KeyCell $on /><ButtonCell><div><ApplyBtn>应用</ApplyBtn><ApplyBtn>取消</ApplyBtn></div></ButtonCell></tr>
                <tr><ValueCell colSpan={2} /></tr>
                <tr><KeyCell /><ValueCell $ro>35</ValueCell></tr>
                <tr><KeyCell /><ValueCell $ro>固定支撑</ValueCell></tr>
                <tr><KeyCell /><ValueCell>否</ValueCell></tr>
              </tbody>
            </Props>
          </Details>
        </Side>

        <Stage>
          <Toolbar>
            <Grip />
            <Tool><Lens inner={<path d="M11 7.500H4M7 5L4 7.500 7 10" stroke={GOLD} strokeWidth="1.800" />} /></Tool>
            <Tool><Lens line="#a5a5a8" fill="#efeef3" inner={<path d="M4 7.500h7" stroke="#bbb" strokeWidth="1.500" />} /></Tool>
            <ToolSep />
            <Tool $on><Solid d /></Tool><Tool><Solid /></Tool><Tool $w={26}><Swap /></Tool>
            <ToolSep />
            <Tool><Expand /></Tool><Tool $w={27}><Expand off /></Tool>
            <ToolSep />
            <Tool $w={33}><Rotate /></Tool><Caret /><Tool $w={29}><Move /></Tool>
            <Tool $w={27}><Lens inner={<path d="M7.500 3l2.500 3H5zM7.500 12L10 9H5z" fill={GOLD} />} /></Tool>
            <Tool $w={27}><Lens inner={<path d="M4 7.500h7M7.500 4v7" stroke={GOLD} strokeWidth="2.200" />} /></Tool>
            <Tool $w={27}><Lens inner={<circle cx="7.500" cy="7.500" r="3.500" fill="#5d83ad" />} /></Tool>
            <Tool $w={28}><Lens inner={<circle cx="7.500" cy="7.500" r="3.500" fill="#58a070" />} /></Tool>
            <ToolSep />
            <ToolText $l={7} $r={9}>选择</ToolText>
            <ToolText $r={10}><Mode />模式<Caret /></ToolText>
            <Tool $on><SelFilter /></Tool>
            <Tool><ToolCube /></Tool>
            <Tool><ToolCube dot="#2fae46" /></Tool>
            <Tool $w={27}><ToolCube top="#20cf35" /></Tool>
            <Tool $w={28}><ToolCube face="#c5c5c7" line="#8e8e90" /></Tool>
            <Tool $w={27}><ToolCube face="#dcecf6" grid line="#4b6f88" /></Tool>
            <Tool $w={28}><ToolCube face="#dcecf6" grid top="#2aa548" line="#4b6f88" /></Tool>
            <Tool $w={27}><ToolCube face="#d5d5d7" line="#8e8e90" top="#bbb" /></Tool>
            <Tool><Xyz /></Tool>
            <Tool $w={27}><Tag t="100" /></Tool>
            <Tool><Tag t="Abc" off /></Tool>
            <ToolSep />
            <ToolText $l={5} $r={16}><Clip />剪贴板<Caret /></ToolText>
            <ToolText $r={6}>[ 空 ]</ToolText>
            <ToolSep />
            <ToolText $l={5} $r={16}><Extend />扩展<Caret /></ToolText>
            <ToolText $r={15}><Pin />选择依据<Caret /></ToolText>
            <ToolText $r={13}><Convert />转换<Caret /></ToolText>
            <Caret $dark $gap={12} />
          </Toolbar>

          <View>
            <Model width="700" height="560" viewBox="195 213 700 560" fill="none">
              <path d="M689 605h24c17 0 33 11 34 30l-1 138h-59v-97h2z" fill="#939392" />
              <path d="M743 382l110-8-3 263h-30l-76-128-2-8v-60z" fill="#798d9e" stroke="#f3dfe4" strokeWidth="1.500" />
              <path d="M743 382l110-8-3 263h-30l-76-128-2-8v-60z" stroke="#8b3a4c" strokeWidth="1.800" strokeDasharray="2 3" />
              <circle cx="813" cy="456" r="3" fill="#6b8fc4" />
              <path d="M746.500 451v22l5-5 5 9 4-2-4-8h6z" fill="#fff" stroke="#111" />
              <path d="M763 467h15l7 6v16h-15l-7-7z" fill="#fff" /><path d="M764.500 468.500h12l6 5.500h-12z" fill="#000" stroke="#000" />
              <path d="M764.500 468.500v12l6 7M770.500 474.500h12.500v13h-12.500z" fill="#fff" stroke="#000" strokeWidth="1.500" />
            </Model>
            <Info>
              <b>B: 静态结构</b><span>固定支撑</span><span>时间: 1. s</span><span>2022/12/13 0:47</span>
              <Legend><i />固定支撑</Legend>
            </Info>
            <Watermark>小汪学知识</Watermark>
            <Scale>
              <Ticks><span>0.000</span><span>15.000</span><span>30.000<em> (mm)</em></span></Ticks>
              <Bar><i /><i /><i /><i /></Bar>
              <Ticks $inset><span>7.500</span><span>22.500</span></Ticks>
            </Scale>
            <Logo><Svg w={41} h={34}><path d="M15 0h10L11 34H0zM26 2l14 32H29L21 13z" fill="#fff" /></Svg>nsys</Logo>
            <Triad width="30" height="130" viewBox="1698 542 30 130">
              <text x="1713" y="558" fontSize="13" fontFamily="Noto Sans" fill="#1f9a38">Y</text>
              <path d="M1715 572l8 20h-16z" fill="#0e7d1c" /><path d="M1712.500 592h5v54h-5z" fill="#15801f" />
              <path d="M1712 653h16v5h-16z" fill="#b01818" /><circle cx="1709.500" cy="649" r="8.500" fill="#0808b4" /><path d="M1706 636h5v4" stroke="#2233aa" fill="none" />
            </Triad>
          </View>

          <Panes>
            <Pane $basis="0 1 812px" $bg="#fff">
              <PanelHead $pad={6}><span>图形</span><Dots /><PanelButtons /></PanelHead>
              <Graph>1.<Plot />1.</Graph>
            </Pane>
            <Pane $basis="1 1 0" $bg="#9e9ea0">
              <PanelHead $pad={6}><span>表格数据</span><Dots /></PanelHead>
            </Pane>
          </Panes>
        </Stage>
      </Work>

      <Status>
        <StatusItem $r={22}>消息窗格</StatusItem>
        <StatusItem $r={27}>无选择</StatusItem>
        <StatusItem $r={24}><i />度量标准（mm、kg、N、s、mV、mA）</StatusItem>
        <StatusItem $r={20}>度</StatusItem>
        <StatusItem $r={16}>rpm</StatusItem>
      </Status>

      <Taskbar>
        <Weather>多云</Weather>
        <Apps>
          <AppBtn aria-label="开始"><Svg w={30} h={30}><path d="M0 0h14v14H0zM16 0h14v14H16zM0 16h14v14H0zM16 16h14v14H16z" fill="#1c87dc" /></Svg></AppBtn>
          <Search><Svg w={17} h={18}><circle cx="10" cy="7" r="6" stroke="#222" strokeWidth="1.800" /><path d="M6 11l-5 6" stroke="#222" strokeWidth="2" /></Svg>搜索</Search>
          <AppBtn aria-label="任务视图"><Svg w={30} h={28}><path d="M0 7h22v21H0z" fill="#333" /><path d="M8 0h22v19H8z" fill="#f2f2f2" fillOpacity=".85" /><path d="M8 7h14v12H8z" fill="#c2c2c2" /></Svg></AppBtn>
          <AppBtn aria-label="文件资源管理器"><Svg w={30} h={28}><path d="M0 2h10l3 3v4H0z" fill="#d99a1c" /><path d="M0 6h30v21H0z" fill="#fbcf45" /><path d="M5 27v-5l3-2h14l3 2v5z" fill="#1c78c4" /></Svg><Mark /></AppBtn>
          <AppBtn aria-label="浏览器"><Svg w={30} h={30}><circle cx="15" cy="15" r="15" fill="#1563b5" /><path d="M1 12C3 2 12 0 15 0c10 0 15 7 15 13 0 5-4 7-8 7-4 0-5-2-3-5 1-7-11-9-18-3z" fill="#3fc7a6" /><path d="M1 12C4 4 10 0 15 0c4 0 7 1 9 3C14 2 8 8 1 12z" fill="#2aa4e0" /><path d="M19 15c-2 3 0 5 3 5s6-1 7-3c-2 6-8 6-11 5-4-2-6-5-4-10 2-1 6 0 5 3z" fill="#d6e9f0" /></Svg><Mark /></AppBtn>
          <AppBtn aria-label="百度"><Sq bg="#f6fafc"><g fill="#1e5fc0"><ellipse cx="7" cy="12" rx="3" ry="4.500" /><ellipse cx="12" cy="6" rx="2.800" ry="4.500" /><ellipse cx="18.500" cy="6" rx="2.800" ry="4.500" /><ellipse cx="24" cy="12" rx="3" ry="4.500" /><path d="M15 12c4 0 9 7 9 11 0 5-5 4-9 4s-9 1-9-4c0-4 5-11 9-11z" /></g><text x="9" y="24" fontSize="11" fontWeight="700" fontFamily="Noto Sans" fill="#fff">du</text><path d="M8 29h7" stroke="#d03030" strokeWidth="2" /><path d="M15 29h7" stroke="#1e5fc0" strokeWidth="2" /></Sq></AppBtn>
          <AppBtn aria-label="hao123"><Sq bg="#fff"><text x="4" y="14" fontSize="12" fontWeight="700" fontFamily="Noto Sans" fill="#3fa838">hǎo</text><text x="7" y="25" fontSize="10" fontWeight="700" fontFamily="Noto Sans" fill="#e8702a">123</text></Sq></AppBtn>
          <AppBtn aria-label="媒体播放器"><Svg w={30} h={30}><circle cx="15" cy="15" r="15" fill="#8a6aa6" /><path d="M2 8a15 15 0 0 1 26 0z" fill="#e88a4a" /><circle cx="15" cy="15" r="12.500" fill="#35353a" /><path d="M11 8l10 7-10 7z" fill="#fff" /></Svg><Mark /></AppBtn>
          <AppBtn aria-label="SolidWorks"><Svg w={30} h={30}><path d="M1 5L14 0l14 4v18L14 28 1 22z" fill="#c0171f" /><path d="M1 5l13 3 14-4L14 0z" fill="#8f1016" /><text x="2" y="20" fontSize="14" fontWeight="700" fontFamily="Noto Sans" fill="#fff">SW</text><path d="M12 22h18v8H12z" fill="#222" /><text x="12" y="29" fontSize="8" fontWeight="700" fontFamily="Noto Sans" fill="#fff">2021</text></Svg><Mark /></AppBtn>
          <AppBtn aria-label="Workbench"><Sq bg="#050505"><path d="M15 2l4 2v5l-4 2-4-2V4zM10 10l4 2v5l-4 2-4-2v-5zM20 10l4 2v5l-4 2-4-2v-5zM11 4l4 2 4-2M6 12l4 2 4-2M16 12l4 2 4-2" stroke="#e0a52a" strokeWidth="1.500" /><text x="5" y="29" fontSize="12" fontWeight="700" fontFamily="Noto Sans" fill="#fff">WB</text></Sq><Mark /></AppBtn>
          <AppBtn aria-label="DesignModeler" $on><Sq bg="#050505"><path d="M8 2l15 8-15 8zM12 7v6l6-3z" stroke="#e0a52a" strokeWidth="2" /><text x="5" y="29" fontSize="12" fontWeight="700" fontFamily="Noto Sans" fill="#fff">DM</text></Sq><Mark $on /></AppBtn>
        </Apps>
        <Tray>
          <TrayBtn $w={30} aria-label="显示隐藏的图标"><Svg w={16} h={10}><path d="M1 9l7-7 7 7" stroke="#222" strokeWidth="1.500" /></Svg></TrayBtn>
          <TrayBtn $w={30} aria-label="安全卫士"><Svg w={20} h={20}><circle cx="10" cy="10" r="10" fill="#f3df26" /><path d="M1 6a10 10 0 0 1 17-2c-6-3-11-2-17 2zM19 14a10 10 0 0 1-17 2c6 3 11 2 17-2z" fill="#249a3c" /><path d="M10 6v8M6 10h8" stroke="#249a3c" strokeWidth="2" /></Svg></TrayBtn>
          <TrayBtn $w={30} aria-label="更新"><Svg w={20} h={20}><path d="M1 9c1-9 13-10 17-3M18.500 1v5.500H13M2 19v-6h5M2 14c2 4 4 5 8 5" stroke="#222" strokeWidth="1.400" /><circle cx="15" cy="15" r="5" fill="#1173d4" /></Svg></TrayBtn>
          <TrayBtn $w={40} aria-label="麦克风"><Svg w={14} h={20}><rect x="4" y="1" width="6" height="11" rx="3" stroke="#28559c" strokeWidth="1.500" /><path d="M1 9c0 8 12 8 12 0M7 15v4" stroke="#28559c" strokeWidth="1.500" /></Svg></TrayBtn>
          <TrayBtn $w={42}>中</TrayBtn>
          <TrayBtn $w={34} aria-label="网络"><Svg w={20} h={16}><path d="M1 6c5-6 13-6 18 0M4 9c4-4 8-4 12 0M7 12c2-2 4-2 6 0" stroke="#222" strokeWidth="1.400" /><circle cx="10" cy="14" r="1.600" fill="#222" /></Svg></TrayBtn>
          <TrayBtn $w={30} aria-label="音量"><Svg w={20} h={16}><path d="M1 5h3l5-4v14l-5-4H1zM12 5c2 2 2 4 0 6M14 3c3 3 3 7 0 10M16.500 1c4 4 4 10 0 14" stroke="#222" strokeWidth="1.300" /></Svg></TrayBtn>
          <TrayBtn $w={30} aria-label="电池"><Svg w={20} h={16}><path d="M7 4h10v10H5v-4" stroke="#111" strokeWidth="1.500" /><path d="M8 6h8v6H7z" fill="#111" /><path d="M18 6h2v5h-2z" fill="#111" /><path d="M0 3h7v4L4 9 0 7zM1 0v4M5 0v4M3 8v4" fill="#111" stroke="#111" /></Svg></TrayBtn>
        </Tray>
      </Taskbar>
    </Window>
  );
}
